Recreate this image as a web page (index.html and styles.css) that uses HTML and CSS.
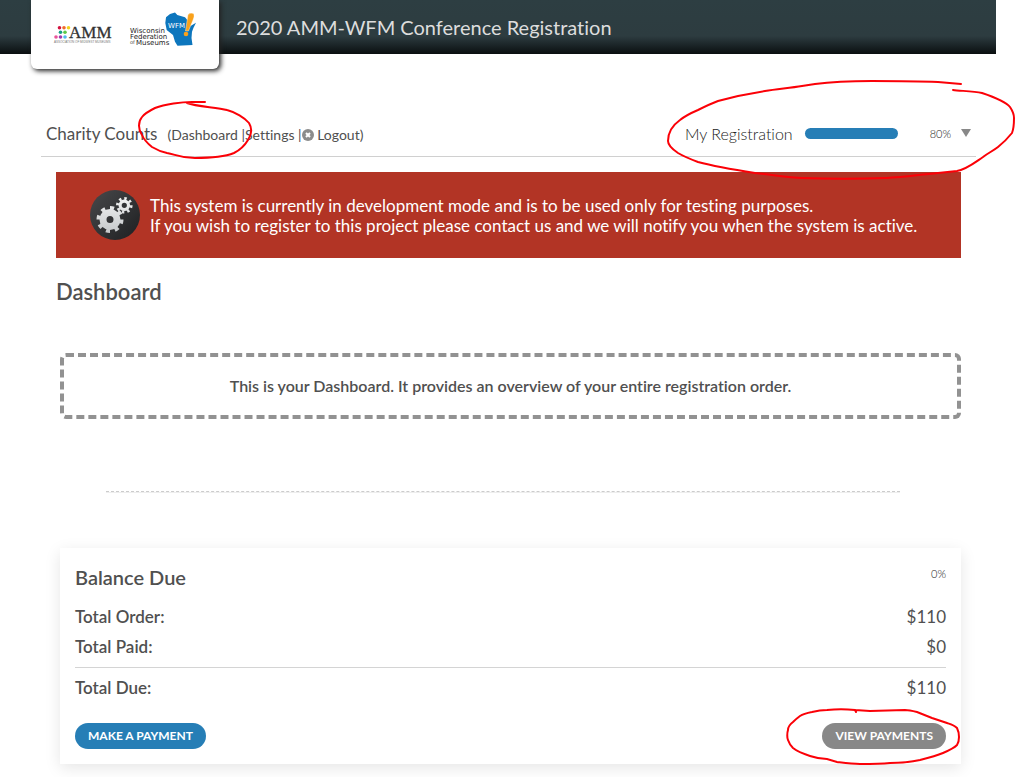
FILE: index.html
```html
<!DOCTYPE html>
<html lang="en">
<head>
<meta charset="utf-8">
<title>2020 AMM-WFM Conference Registration</title>
<link rel="stylesheet" href="styles.css">
</head>
<body>
<div class="page">
  <header class="site-header">
    <div class="logo-card">
      <svg class="logo" viewBox="0 0 188 69" role="img" aria-label="AMM and Wisconsin Federation of Museums">
        <g>
          <circle cx="28.500" cy="27.700" r="1.800" fill="#d3123f"/>
          <circle cx="33" cy="27.700" r="1.800" fill="#ef6a2c"/>
          <circle cx="37.500" cy="27.700" r="1.800" fill="#f2d21c"/>
          <circle cx="29.500" cy="32.300" r="1.800" fill="#16a085"/>
          <circle cx="34" cy="32.300" r="1.800" fill="#5cc947"/>
          <circle cx="25" cy="37" r="1.800" fill="#e8559a"/>
          <circle cx="29.500" cy="37" r="1.800" fill="#a23ab0"/>
          <circle cx="34" cy="37" r="1.800" fill="#4fb9ec"/>
        </g>
        <text class="logo-amm" x="38" y="38">AMM</text>
        <text class="logo-tiny" x="23" y="43">ASSOCIATION OF MIDWEST MUSEUMS</text>
        <g class="logo-wfm">
          <text x="99" y="33">Wisconsin</text>
          <text x="99" y="39">Federation</text>
          <text x="105" y="45">Museums</text>
        </g>
        <text class="logo-of" x="99" y="44">of</text>
        <path fill="#0d76bd" d="M135 17.300L139 14l5-1.500 2.300 2.500 7.700 2.300 4 4.700 1.500 4 5.500-3.300-2.500 5-1.500 4-.5 6.300 1 7-15 .7-2.500-4-2-6.700-6.300-5-1.400-7z"/>
        <text class="logo-badge" x="137" y="28">WFM</text>
        <path fill="#f9a11b" stroke="#fff" stroke-width=".4" d="M157 14.500q3-2.500 6-.5.500 3-1 6l-4.500 11h-3z"/>
        <circle cx="155" cy="34" r="2.300" fill="#f9a11b"/>
      </svg>
    </div>
    <h1 class="site-title">2020 AMM-WFM Conference Registration</h1>
  </header>

  <div class="container">
    <div class="account-bar">
      <div class="account">
        <span class="account-name">Charity Counts</span>
        <nav class="account-links">(<span class="marked"><a href="#">Dashboard</a><svg class="mark mark-dashboard" viewBox="140 100 116 60" aria-hidden="true"><path d="M208 102L195 102C185 102 168 104 158 108C152 111 148 113 145 117C141 122 141 129 145 135C147 140 150 143 155 147C160 150 165 152 170 153C178 154 182 158 198 158C208 158 227 157 237 153C243 150 248 145 251 140C255 134 255 128 252 123C248 118 238 112 230 110C220 107 200 107 190 103"/></svg></span>&nbsp;|<a href="#">Settings</a>&nbsp;|<a href="#"><svg class="icon-logout" viewBox="0 0 12 12" aria-hidden="true"><circle cx="6" cy="6" r="6" fill="#8c8c8c"/><path d="M4 4l4 4M8 4l-4 4" stroke="#fff" stroke-width="2"/></svg> Logout</a>)</nav>
      </div>
      <div class="registration">
        <span class="registration-label">My Registration</span>
        <span class="progress"></span>
        <span class="percent">80%</span>
        <button class="toggle" aria-label="Show registration steps"><svg viewBox="0 0 10 8" aria-hidden="true"><path d="M0 0h10l-5 8z" fill="#888"/></svg></button>
        <svg class="mark mark-registration" viewBox="665 80 350 100" aria-hidden="true"><path d="M961 84L938 82C915 81 890 81 872 81C850 81 830 82 815 84L802 86C790 88 777 89 765 91L738 96L718 101C710 104 704 107 698 110C691 113 685 116 680 120C673 125 668 132 668 141C668 145 672 149 678 153C683 156 690 159 698 162C717 167 736 170 755 173C775 175 788 178 802 178C830 179 858 179 885 178C895 178 917 175 938 173L957 171C967 169 974 163 983 157C988 153 993 151 998 147C1003 143 1008 138 1012 133C1014 128 1014 124 1014 118C1014 114 1012 110 1010 107C1006 102 994 97 982 93C973 91 960 91 953 90"/></svg>
      </div>
    </div>

    <main class="content">
      <div class="notice">
        <svg class="notice-icon" viewBox="0 0 50 50" aria-hidden="true">
          <defs>
            <linearGradient id="disc" x1="0" y1="0" x2="1" y2="1"><stop offset="0" stop-color="#48494b"/><stop offset="1" stop-color="#1e1f21"/></linearGradient>
            <linearGradient id="metal" gradientUnits="userSpaceOnUse" x1="0" y1="6" x2="0" y2="44"><stop offset="0" stop-color="#f4f4f4"/><stop offset="1" stop-color="#c4c7c9"/></linearGradient>
          </defs>
          <circle cx="25" cy="25" r="25" fill="url(#disc)"/>
          <g fill="none" stroke="url(#metal)">
            <circle cx="20" cy="29.500" r="7" stroke-width="7"/>
            <circle cx="20" cy="29.500" r="11.500" stroke-width="4" pathLength="16" stroke-dasharray="0.900 1.100"/>
            <circle cx="34.300" cy="15.300" r="4.200" stroke-width="3.200"/>
            <circle cx="34.300" cy="15.300" r="6.800" stroke-width="3" pathLength="16" stroke-dasharray="0.900 1.100"/>
          </g>
        </svg>
        <p class="notice-text">This system is currently in development mode and is to be used only for testing purposes.<br>If you wish to register to this project please contact us and we will notify you when the system is active.</p>
      </div>
      <h2 class="page-title">Dashboard</h2>
      <p class="intro">This is your Dashboard. It provides an overview of your entire registration order.</p>
      <hr class="divider">
      <section class="card">
        <div class="card-head"><h3 class="card-title">Balance Due</h3><span class="percent">0%</span></div>
        <dl class="totals">
          <div class="row"><dt>Total Order:</dt><dd>$110</dd></div>
          <div class="row"><dt>Total Paid:</dt><dd>$0</dd></div>
          <div class="row row-due"><dt>Total Due:</dt><dd>$110</dd></div>
        </dl>
        <div class="actions">
          <button class="btn btn-primary">MAKE A PAYMENT</button>
          <span class="marked"><button class="btn btn-muted">VIEW PAYMENTS</button><svg class="mark mark-payments" viewBox="786 708 175 58" aria-hidden="true"><path d="M856 712L855 710C846 709 836 709 827 710C820 710 816 711 812 712C807 713 803 714 800 716C796 719 795 720 793 722C789 725 788 728 788 730C787 733 787 738 788 740C789 743 791 746 793 748C798 752 804 754 810 756C816 758 821 759 827 759L837 762C845 763 852 764 860 764C870 764 880 764 890 763C901 763 911 762 920 760C928 758 936 756 943 753C950 750 954 748 957 745C959 742 959 739 959 737C959 733 958 730 957 728C954 725 950 724 947 723L932 718L917 712C913 711 909 710 905 710L870 711L855 710"/></svg></span>
        </div>
      </section>
    </main>
  </div>
</div>
</body>
</html>
```

FILE: styles.css
```css
* { box-sizing: border-box; }
body { margin: 0; background: #fff; color: #505050; font-family: Lato, "Liberation Sans", sans-serif; font-size: 18px; font-variant-ligatures: none; }
a { color: inherit; text-decoration: none; }
h1, h2, h3, p, dl, dd { margin: 0; }
button { font-family: inherit; border: 0; cursor: pointer; }

.page { margin-right: 19px; }
.site-header { display: flex; align-items: flex-start; gap: 17px; height: 54px; padding-left: 31px; background: linear-gradient(#2d3e42 0, #2d3c40 36px, #0a0f10 54px); }
.logo-card { width: 188px; height: 69px; background: #fff; border-radius: 0 0 6px 6px; box-shadow: 2px 2px 5px #222; }
.logo { display: block; width: 188px; height: 69px; }
.logo-amm { font: 17px "Liberation Serif", serif; fill: #333; stroke: #333; stroke-width: .3; }
.logo-tiny { font: 3px "Liberation Sans", sans-serif; fill: #777; }
.logo-wfm { font: 7px "DejaVu Sans", sans-serif; fill: #222; }
.logo-of { font: 5px "DejaVu Sans", sans-serif; fill: #444; }
.logo-badge { font: 7px "DejaVu Sans", sans-serif; fill: #fff; }
.site-title { padding-top: 15px; color: #ddd; font-size: 20px; line-height: 24px; font-weight: 400; }

.container { padding: 50px 20px 0 41px; }
.account-bar { display: flex; justify-content: space-between; align-items: center; height: 53px; padding: 6px 5px 0; border-bottom: 1px solid #d0d0d0; }
.account { display: flex; align-items: baseline; gap: 10px; }
.account-name { font-size: 17px; }
.account-links { font-size: 14px; }
.marked { position: relative; display: inline-block; }
.icon-logout { width: 12px; height: 12px; vertical-align: -1px; }
.registration { position: relative; display: flex; align-items: center; }
.registration-label { font-size: 16px; font-weight: 300; color: #222; }
.progress { width: 93px; height: 11px; margin: 0 32px 0 12px; border-radius: 6px; background: #267eb6; }
.percent { font-size: 11px; font-weight: 300; color: #222; }
.toggle { display: flex; padding: 0; margin-left: 10px; background: none; }
.toggle svg { width: 10px; height: 8px; }
.mark { position: absolute; z-index: 2; fill: none; stroke: #fb0007; stroke-width: 2; stroke-linecap: round; pointer-events: none; }
.mark-dashboard { left: -34px; top: -26px; width: 116px; height: 60px; }
.mark-registration { right: -44px; top: -44px; width: 350px; height: 100px; }
.mark-payments { right: -15px; top: -15px; width: 175px; height: 58px; }

.content { padding: 15px; }
.notice { display: flex; align-items: center; gap: 10px; padding: 18px 34px; background: #b23425; color: #fff; }
.notice-icon { width: 50px; height: 50px; flex: none; }
.notice-text { padding-top: 2px; font-size: 17px; line-height: 20px; }
.page-title { margin-top: 21px; font-size: 22px; line-height: 26px; font-weight: 600; }
.intro { margin: 48px 0 0 4px; padding: 17px; border: 4px dashed #929292; border-radius: 6px; font-size: 16px; line-height: 24px; font-weight: 600; text-align: center; }
.divider { margin: 72px 61px 0 50px; border: 0 solid #eee; border-top: 1px dashed #ccc; border-bottom-width: 1px; }
.card { margin: 55px 0 0 4px; padding: 15px; box-shadow: 0 4px 15px rgba(0,0,0,.1); }
.card-head { display: flex; justify-content: space-between; line-height: 22px; }
.card-title { font-size: 20px; line-height: 28px; font-weight: 600; }
.totals { margin-top: 11px; }
.row { display: flex; justify-content: space-between; font-size: 17px; line-height: 30px; }
.row dt { font-weight: 600; }
.row-due { margin-top: 5px; padding-top: 5px; border-top: 1px solid #d4d4d4; }
.actions { display: flex; justify-content: space-between; margin-top: 20px; }
.btn { display: block; height: 26px; padding: 0 13px; border-radius: 13px; color: #fff; font-size: 12px; line-height: 24px; font-weight: 700; }
.btn-primary { background: #267eb6; }
.btn-muted { background: #888; }
```
